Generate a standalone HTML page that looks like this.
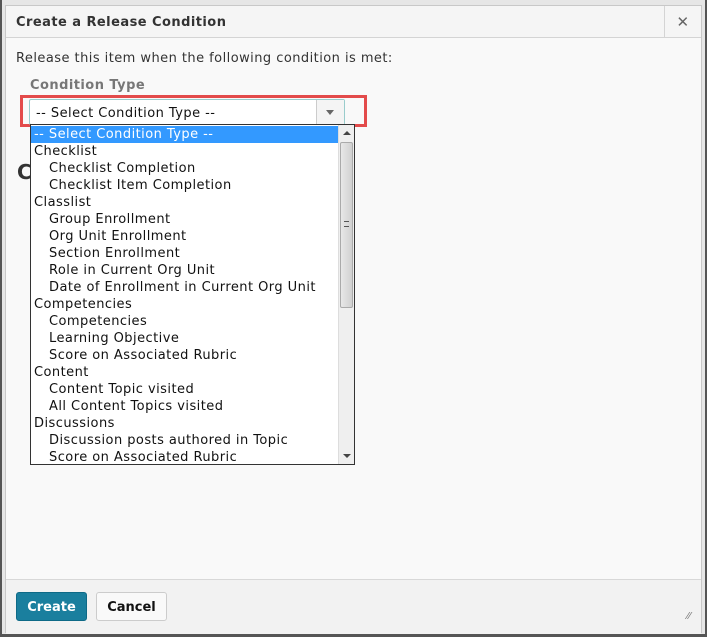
<!DOCTYPE html>
<html><head><style>
*{margin:0;padding:0;box-sizing:border-box}
body{width:707px;height:637px;background:#fff;position:relative;overflow:hidden;font-family:"DejaVu Sans","Liberation Sans",sans-serif;letter-spacing:0.45px}
.outer{position:absolute;left:0;top:0;width:707px;height:637px;border-left:2px solid #555;border-right:2px solid #555;border-bottom:3px solid #555;background:#e6e6e6}
.dlg{position:absolute;left:5px;top:5px;width:697px;height:628px;border:1px solid #c8c8c8;background:#f9f9f9}
.hdr{position:absolute;left:0;top:0;width:100%;height:32px;background:#f5f5f5;border-bottom:1px solid #d4d4d4}
.hdr .t{position:absolute;left:10px;top:9px;font-size:13px;font-weight:bold;color:#333}
.close{position:absolute;right:0;top:0;width:37px;height:32px;border-left:1px solid #d4d4d4;text-align:center;line-height:33px;font-size:15px;font-weight:bold;color:#666}
.txt{position:absolute;font-size:13px;color:#333;white-space:nowrap}
.foot{position:absolute;left:0;top:573px;width:100%;height:55px;background:#f2f2f2;border-top:1px solid #d8d8d8}
.btn{position:absolute;top:12px;height:29px;border-radius:3px;font-size:13px;font-weight:bold;text-align:center;line-height:30px;letter-spacing:0}
.list{position:absolute;left:30px;top:124px;width:325px;height:341px;border:1px solid #333;background:#fff;padding-top:1px}
.it{height:17px;line-height:18px;font-size:13px;color:#111;padding-left:3px;white-space:nowrap}
.it.s{padding-left:18px}
.it.h{background:#3399ff;color:#fff;margin-right:15px}
.sb{position:absolute;right:0;top:0;width:16px;height:100%;background:#efefef;border-left:1px solid #ddd}
.thumb{position:absolute;left:1px;top:17px;width:13px;height:166px;background:linear-gradient(90deg,#e8e8e8,#d0d0d0);border:1px solid #aaa;border-radius:2px}
</style></head><body>
<div class="outer"></div>
<div class="dlg">
 <div class="hdr"><div class="t">Create a Release Condition</div><div class="close">✕</div></div>
 <div class="txt" style="left:10px;top:45px">Release this item when the following condition is met:</div>
 <div class="txt" style="left:24px;top:72px;font-weight:bold;color:#777">Condition Type</div>
 <div style="position:absolute;left:14px;top:89px;width:347px;height:32px;border:3px solid #e34b4b"></div>
 <div style="position:absolute;left:23px;top:93px;width:316px;height:26px;border:1px solid #9cc;background:#fff;border-radius:2px">
  <div class="txt" style="left:6px;top:6px;color:#111">-- Select Condition Type --</div>
  <div style="position:absolute;right:0;top:0;width:28px;height:24px;border-left:1px solid #ccc;background:#f4f4f4"></div>
  <div style="position:absolute;right:10px;top:10px;width:0;height:0;border-left:4px solid transparent;border-right:4px solid transparent;border-top:5px solid #666"></div>
 </div>
 <div class="txt" style="left:11px;top:154px;font-size:20px;font-weight:bold;color:#333">C</div>
 <div class="foot">
  <div class="btn" style="left:10px;width:71px;background:#1a7f9e;border:1px solid #0e6a87;color:#fff">Create</div>
  <div class="btn" style="left:90px;width:71px;background:#f9f9f9;border:1px solid #ccc;color:#111">Cancel</div>
  <div style="position:absolute;right:10px;bottom:12px;font-size:10px;color:#777">⁄⁄</div>
 </div>
</div>
<div class="list">
 <div class="it h">-- Select Condition Type --</div>
 <div class="it">Checklist</div>
 <div class="it s">Checklist Completion</div>
 <div class="it s">Checklist Item Completion</div>
 <div class="it">Classlist</div>
 <div class="it s">Group Enrollment</div>
 <div class="it s">Org Unit Enrollment</div>
 <div class="it s">Section Enrollment</div>
 <div class="it s">Role in Current Org Unit</div>
 <div class="it s">Date of Enrollment in Current Org Unit</div>
 <div class="it">Competencies</div>
 <div class="it s">Competencies</div>
 <div class="it s">Learning Objective</div>
 <div class="it s">Score on Associated Rubric</div>
 <div class="it">Content</div>
 <div class="it s">Content Topic visited</div>
 <div class="it s">All Content Topics visited</div>
 <div class="it">Discussions</div>
 <div class="it s">Discussion posts authored in Topic</div>
 <div class="it s">Score on Associated Rubric</div>
 <div class="sb">
  <div style="position:absolute;left:4px;top:6px;border-left:4px solid transparent;border-right:4px solid transparent;border-bottom:4px solid #444"></div>
  <div class="thumb"><div style="position:absolute;left:3px;top:78px;width:5px;height:6px;border-top:1px solid #555;border-bottom:1px solid #555"></div></div>
  <div style="position:absolute;left:4px;bottom:6px;border-left:4px solid transparent;border-right:4px solid transparent;border-top:4px solid #444"></div>
 </div>
</div>
</body></html>
